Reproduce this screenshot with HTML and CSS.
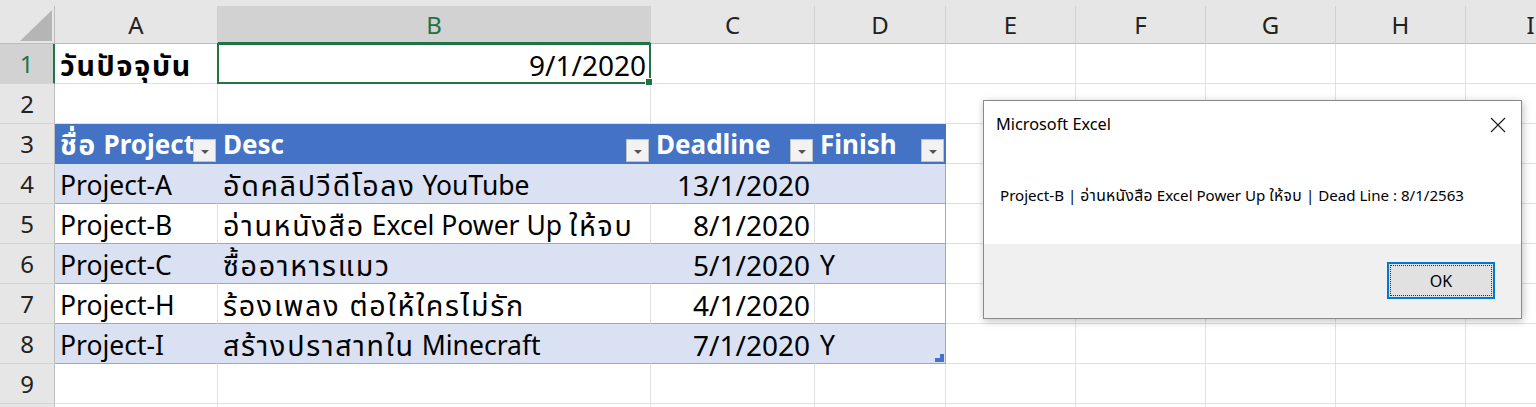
FILE: index.html
```html
<!DOCTYPE html>
<html lang="th">
<head>
<meta charset="utf-8">
<title>Excel</title>
<link rel="stylesheet" href="styles.css">
</head>
<body>
<div class="sheet">
  <!-- column headers -->
  <div class="ch corner"><svg class="tri" width="32" height="31" viewBox="0 0 32 31"><polygon points="0,31 32,31 32,0" fill="#b5b5b5"/></svg></div>
  <div class="ch">A</div>
  <div class="ch sel">B</div>
  <div class="ch">C</div>
  <div class="ch">D</div>
  <div class="ch">E</div>
  <div class="ch">F</div>
  <div class="ch">G</div>
  <div class="ch">H</div>
  <div class="ch">I</div>

  <!-- row 1 -->
  <div class="rh sel">1</div>
  <div class="c bold"><span class="tt">วันปัจจุบัน</span></div>
  <div class="c num active">9/1/2020<span class="handle"></span></div>
  <div class="c"></div><div class="c"></div><div class="c"></div><div class="c"></div><div class="c"></div><div class="c"></div><div class="c"></div>

  <!-- row 2 -->
  <div class="rh">2</div>
  <div class="c"></div><div class="c"></div><div class="c"></div><div class="c"></div><div class="c"></div><div class="c"></div><div class="c"></div><div class="c"></div><div class="c"></div>

  <!-- row 3 table header -->
  <div class="rh">3</div>
  <div class="c th"><span class="tx"><span class="tt">ชื่อ</span>&nbsp;Project</span><span class="dd"></span></div>
  <div class="c th"><span class="tx">Desc</span><span class="dd"></span></div>
  <div class="c th"><span class="tx">Deadline</span><span class="dd"></span></div>
  <div class="c th last"><span class="tx">Finish</span><span class="dd"></span></div>
  <div class="c"></div><div class="c"></div><div class="c"></div><div class="c"></div><div class="c"></div>

  <!-- row 4 -->
  <div class="rh">4</div>
  <div class="c t band">Project-A</div>
  <div class="c t band"><span class="tt">อัดคลิปวีดีโอลง</span>&nbsp;YouTube</div>
  <div class="c t band num">13/1/2020</div>
  <div class="c t band last"></div>
  <div class="c"></div><div class="c"></div><div class="c"></div><div class="c"></div><div class="c"></div>

  <!-- row 5 -->
  <div class="rh">5</div>
  <div class="c t">Project-B</div>
  <div class="c t"><span class="tt">อ่านหนังสือ</span>&nbsp;Excel Power Up&nbsp;<span class="tt">ให้จบ</span></div>
  <div class="c t num">8/1/2020</div>
  <div class="c t last"></div>
  <div class="c"></div><div class="c"></div><div class="c"></div><div class="c"></div><div class="c"></div>

  <!-- row 6 -->
  <div class="rh">6</div>
  <div class="c t band">Project-C</div>
  <div class="c t band"><span class="tt">ซื้ออาหารแมว</span></div>
  <div class="c t band num">5/1/2020</div>
  <div class="c t band last">Y</div>
  <div class="c"></div><div class="c"></div><div class="c"></div><div class="c"></div><div class="c"></div>

  <!-- row 7 -->
  <div class="rh">7</div>
  <div class="c t">Project-H</div>
  <div class="c t"><span class="tt">ร้องเพลง ต่อให้ใครไม่รัก</span></div>
  <div class="c t num">4/1/2020</div>
  <div class="c t last"></div>
  <div class="c"></div><div class="c"></div><div class="c"></div><div class="c"></div><div class="c"></div>

  <!-- row 8 -->
  <div class="rh">8</div>
  <div class="c t band">Project-I</div>
  <div class="c t band"><span class="tt">สร้างปราสาทใน</span>&nbsp;Minecraft</div>
  <div class="c t band num">7/1/2020</div>
  <div class="c t band last">Y<svg class="resize" width="9" height="8" viewBox="0 0 9 8"><polygon points="9,0 9,8 0,8 0,4 5,4 5,0" fill="#4472c4"/></svg></div>
  <div class="c"></div><div class="c"></div><div class="c"></div><div class="c"></div><div class="c"></div>

  <!-- row 9 -->
  <div class="rh">9</div>
  <div class="c"></div><div class="c"></div><div class="c"></div><div class="c"></div><div class="c"></div><div class="c"></div><div class="c"></div><div class="c"></div><div class="c"></div>

  <!-- row 10 (only its top edge is in view) -->
  <div class="rh"></div>
  <div class="c"></div><div class="c"></div><div class="c"></div><div class="c"></div><div class="c"></div><div class="c"></div><div class="c"></div><div class="c"></div><div class="c"></div>
</div>

<div class="dialog">
  <div class="dlg-top">
    <div class="dlg-title">
      <span>Microsoft Excel</span>
      <svg class="close" width="16" height="16" viewBox="0 0 16 16"><path d="M1 1 L15 15 M15 1 L1 15" stroke="#1a1a1a" stroke-width="1.1" fill="none"/></svg>
    </div>
    <div class="dlg-msg">Project-B | <span class="tt">อ่านหนังสือ</span> Excel Power Up <span class="tt">ให้จบ</span> | Dead Line : 8/1/2563</div>
  </div>
  <div class="dlg-bottom">
    <div class="ok"><span class="ok-in">OK</span></div>
  </div>
</div>
</body>
</html>
```

FILE: styles.css
```css
html, body {
  margin: 0;
  padding: 0;
  background: #ffffff;
  overflow: hidden;
}
body {
  width: 1536px;
  height: 407px;
  position: relative;
  font-family: "Noto Sans", "Noto Sans Thai", "Leelawadee UI", "Tahoma", sans-serif;
}
.sheet {
  display: grid;
  grid-template-columns: 55px 163px 433px 164px 131px 130px 130px 130px 130px 130px;
  grid-template-rows: 44px repeat(9, 40px) 4px;
  width: 1596px;
  height: 407px;
  overflow: hidden;
  background: #e6e6e6;
  color: #000;
}
.ch {
  margin-top: 6px;
  background: #e6e6e6;
  border-right: 1px solid #d0d0d0;
  border-bottom: 1px solid #bdbdbd;
  display: flex;
  align-items: center;
  justify-content: center;
  font-size: 24px;
  color: #222;
}
.ch.sel {
  background: #d2d2d2;
  color: #217346;
  border-bottom: 2px solid #217346;
}
.ch.corner {
  justify-content: flex-end;
  align-items: flex-end;
  border-right: 1px solid #bdbdbd;
}
.tri {
  margin: 0 2px 2px 0;
}
.rh {
  background: #e6e6e6;
  border-right: 1px solid #bdbdbd;
  border-bottom: 1px solid #d4d4d4;
  display: flex;
  align-items: center;
  justify-content: center;
  font-size: 24px;
  color: #222;
}
.rh.sel {
  background: #d2d2d2;
  color: #217346;
  border-right: 2px solid #217346;
}
.c {
  background: #fff;
  border-right: 1px solid #e1e1e1;
  border-bottom: 1px solid #e1e1e1;
  display: flex;
  align-items: flex-end;
  padding: 0 4px 2px 5px;
  font-size: 26.5px;
  line-height: 32px;
  white-space: nowrap;
  overflow: hidden;
  position: relative;
  min-width: 0;
}
.tt {
  font-size: 1.08em;
  letter-spacing: 0.06em;
}
.c.bold { font-weight: bold; }
.c.num {
  justify-content: flex-end;
  font-size: 28px;
}
.c.active {
  overflow: visible;
}
.c.active::after {
  content: "";
  position: absolute;
  left: -1px;
  top: -1px;
  right: -1px;
  bottom: -1px;
  border: 2px solid #217346;
  pointer-events: none;
}
.handle {
  position: absolute;
  right: -3px;
  bottom: -3px;
  width: 6px;
  height: 6px;
  background: #217346;
  border: 1px solid #fff;
  z-index: 2;
}
.th {
  background: #4472c4;
  color: #fff;
  font-weight: bold;
  font-size: 26px;
  border-right-color: #4472c4;
  border-bottom-color: #4472c4;
  padding-right: 1px;
  padding-bottom: 1px;
  align-items: stretch;
}
.th .tx {
  flex: 1;
  min-width: 0;
  overflow: hidden;
  display: flex;
  align-items: flex-end;
  padding-bottom: 2px;
}
.dd {
  flex: none;
  align-self: flex-end;
  width: 21px;
  height: 21px;
  background: #f2f2f2;
  border: 1px solid #c2c2c2;
  position: relative;
}
.dd::after {
  content: "";
  position: absolute;
  left: 7px;
  top: 10px;
  border-left: 4px solid transparent;
  border-right: 4px solid transparent;
  border-top: 4px solid #555;
}
.t {
  border-bottom-color: #8ea9db;
}
.t.band {
  background: #d9e1f2;
  border-right-color: #d9e1f2;
}
.t.last {
  border-right-color: #8ea9db;
}
.th.last { border-right-color: #4472c4; }
.resize {
  position: absolute;
  right: 1px;
  bottom: 1px;
}

/* dialog */
.dialog {
  position: absolute;
  left: 983px;
  top: 100px;
  width: 537px;
  height: 217px;
  border: 1px solid #8a8a8a;
  background: #fff;
  box-shadow: 1px 2px 8px rgba(0,0,0,0.25);
  display: flex;
  flex-direction: column;
  font-family: "Noto Sans", "Noto Sans Thai", "Segoe UI", sans-serif;
  color: #000;
}
.dlg-top {
  height: 143px;
  display: flex;
  flex-direction: column;
}
.dlg-title {
  display: flex;
  justify-content: space-between;
  align-items: center;
  padding: 12px 15px 0 12px;
  font-size: 16.3px;
  height: 22px;
}
.close { margin-top: 2px; }
.dlg-msg {
  margin-top: 49px;
  padding-left: 16px;
  font-size: 15.1px;
  white-space: nowrap;
}
.dlg-msg .tt {
  font-size: 1.04em;
  letter-spacing: 0.02em;
}
.dlg-bottom {
  flex: 1;
  background: #f0f0f0;
  display: flex;
  justify-content: flex-end;
  align-items: flex-start;
  padding: 18px 26px 0 0;
}
.ok {
  width: 102px;
  height: 31px;
  border: 2px solid #0078d7;
  background: #e1e1e1;
  display: flex;
  padding: 1px;
  box-sizing: content-box;
}
.ok-in {
  flex: 1;
  border: 1px dotted #333;
  display: flex;
  align-items: center;
  justify-content: center;
  font-size: 16px;
}
```
